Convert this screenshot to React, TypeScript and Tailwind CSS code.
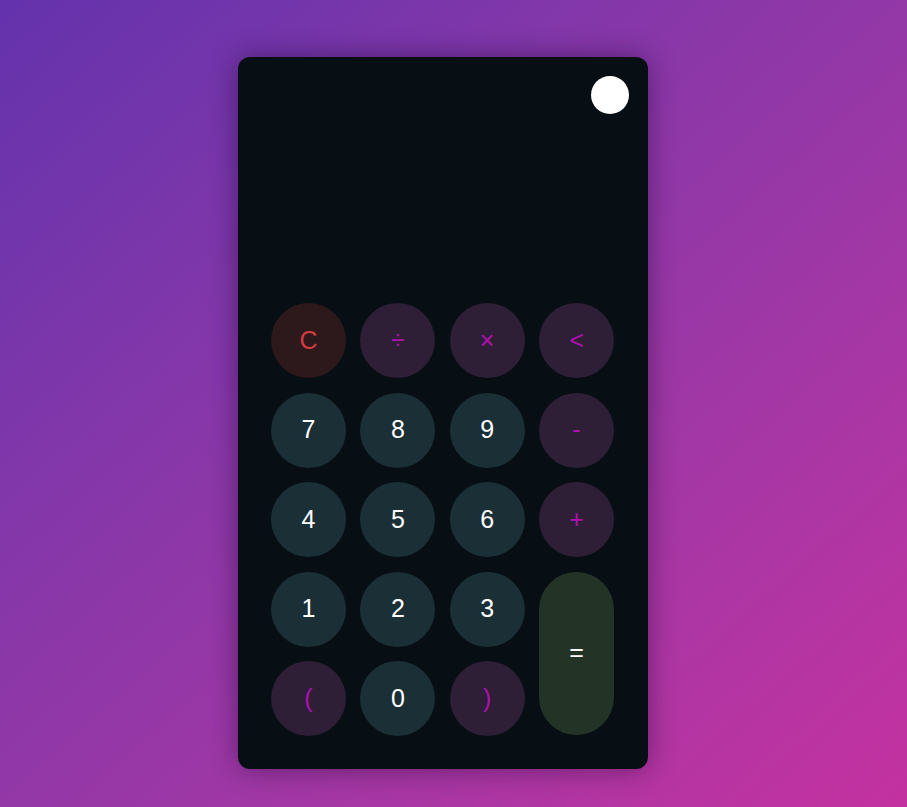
const KEYS = [
  { label: 'C', kind: 'clear' },
  { label: '÷', kind: 'op' },
  { label: '×', kind: 'op' },
  { label: '<', kind: 'op' },
  { label: '7', kind: 'num' },
  { label: '8', kind: 'num' },
  { label: '9', kind: 'num' },
  { label: '-', kind: 'op' },
  { label: '4', kind: 'num' },
  { label: '5', kind: 'num' },
  { label: '6', kind: 'num' },
  { label: '+', kind: 'op' },
  { label: '1', kind: 'num' },
  { label: '2', kind: 'num' },
  { label: '3', kind: 'num' },
  { label: '=', kind: 'eq' },
  { label: '(', kind: 'op' },
  { label: '0', kind: 'num' },
  { label: ')', kind: 'op' },
];

const STYLES: Record<string, string> = {
  clear: 'bg-[#2d181c] text-[#d23b3f]',
  op: 'bg-[#2e1e36] text-[#b010b0]',
  num: 'bg-[#1b2f37] text-white',
  eq: 'bg-[#233426] text-white row-span-2 h-[163px]',
};

export default function App() {
  return (
    <div className="min-h-screen w-full bg-gradient-to-br from-[#6432ad] to-[#c431a0] pl-[238px] pt-[57px] font-['Liberation_Sans',Arial,sans-serif]">
      <div className="relative flex h-[712px] w-[410px] flex-col justify-end rounded-[12px] bg-[#070f14] pl-[33px] pr-[34px] pb-[33px] shadow-[0_0_28px_rgba(20,0,40,0.45)]">
        <button className="absolute right-[19px] top-[19px] h-[38px] w-[38px] rounded-full bg-white" />
        <div className="grid grid-cols-[repeat(4,75px)] justify-between gap-y-[14.5px]">
          {KEYS.map((k) => (
            <button
              key={k.label}
              className={`flex h-[75px] w-[75px] items-center justify-center rounded-full text-[25px] ${STYLES[k.kind]}`}
            >
              {k.label}
            </button>
          ))}
        </div>
      </div>
    </div>
  );
}
